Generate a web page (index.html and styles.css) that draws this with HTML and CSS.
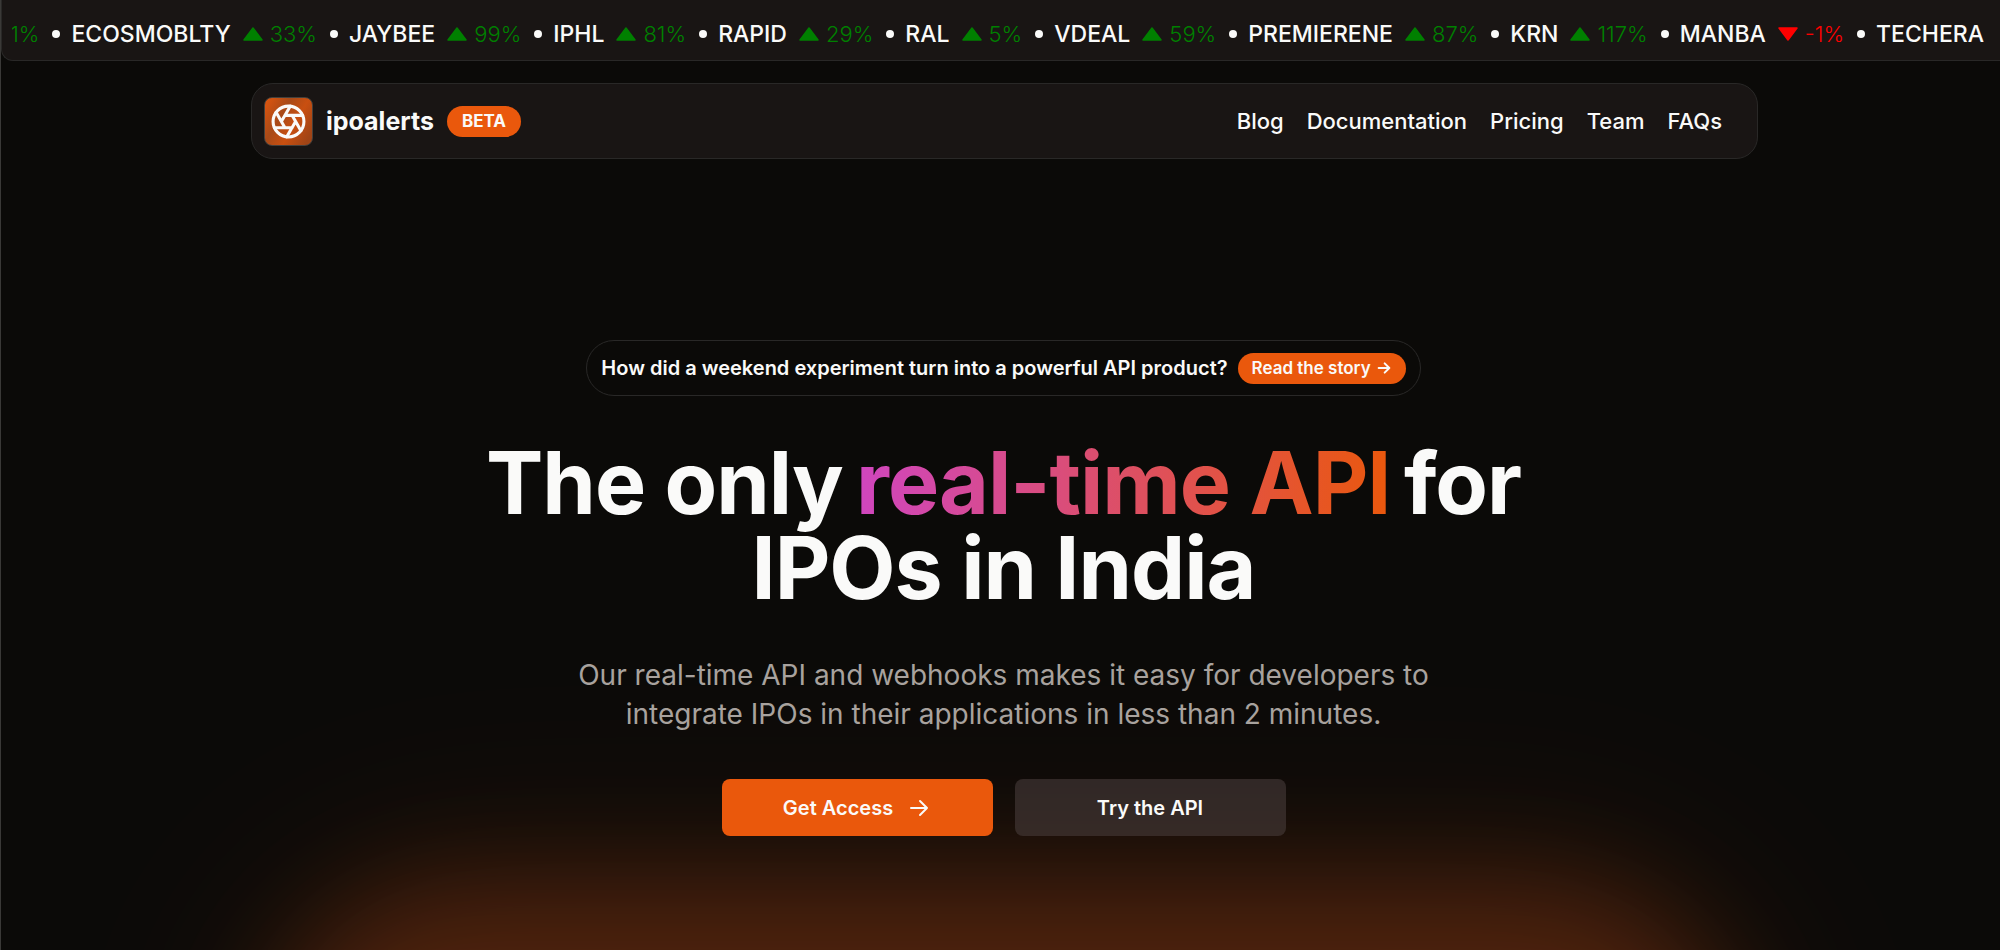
FILE: index.html
```html
<!DOCTYPE html>
<html lang="en">
<head>
    <meta charset="UTF-8">
    <meta name="viewport" content="width=device-width, initial-scale=1.0">
    <title>ipoalerts - Real-time API for IPOs in India</title>
    <link rel="stylesheet" href="styles.css">
</head>
<body>
    <svg class="sprite" aria-hidden="true">
        <symbol id="up" viewBox="0 0 20 14">
            <path d="M10 1 L19 13 H1 Z" fill="currentColor" stroke="currentColor" stroke-width="1.5" stroke-linejoin="round"/>
        </symbol>
        <symbol id="down" viewBox="0 0 20 14">
            <path d="M10 13 L19 1 H1 Z" fill="currentColor" stroke="currentColor" stroke-width="1.5" stroke-linejoin="round"/>
        </symbol>
    </svg>

    <div class="ticker">
        <ul class="ticker-track">
            <li><span class="up">11%</span></li>
            <li><b>ECOSMOBLTY</b><span class="up"><svg><use href="#up"/></svg>33%</span></li>
            <li><b>JAYBEE</b><span class="up"><svg><use href="#up"/></svg>99%</span></li>
            <li><b>IPHL</b><span class="up"><svg><use href="#up"/></svg>81%</span></li>
            <li><b>RAPID</b><span class="up"><svg><use href="#up"/></svg>29%</span></li>
            <li><b>RAL</b><span class="up"><svg><use href="#up"/></svg>5%</span></li>
            <li><b>VDEAL</b><span class="up"><svg><use href="#up"/></svg>59%</span></li>
            <li><b>PREMIERENE</b><span class="up"><svg><use href="#up"/></svg>87%</span></li>
            <li><b>KRN</b><span class="up"><svg><use href="#up"/></svg>117%</span></li>
            <li><b>MANBA</b><span class="down"><svg><use href="#down"/></svg>-1%</span></li>
            <li><b>TECHERA</b></li>
        </ul>
    </div>

    <header class="navbar">
        <a class="brand" href="#">
            <span class="logo">
                <svg viewBox="0 0 24 24" fill="none" stroke="currentColor" stroke-width="2" stroke-linecap="round" stroke-linejoin="round">
                    <circle cx="12" cy="12" r="10"/>
                    <path d="m14.31 8 5.74 9.94M9.69 8h11.48M7.38 12l5.74-9.94M9.69 16 3.95 6.06M14.31 16H2.83M16.62 12l-5.74 9.94"/>
                </svg>
            </span>
            ipoalerts
            <span class="badge">BETA</span>
        </a>
        <nav class="links">
            <a href="#blog">Blog</a>
            <a href="#docs">Documentation</a>
            <a href="#pricing">Pricing</a>
            <a href="#team">Team</a>
            <a href="#faqs">FAQs</a>
        </nav>
    </header>

    <main class="hero">
        <div class="story">
            How did a weekend experiment turn into a powerful API product?
            <a class="story-link" href="#story">Read the story
                <svg viewBox="0 0 24 24" fill="none" stroke="currentColor" stroke-width="3" stroke-linecap="round" stroke-linejoin="round"><path d="M4 12h16M13 5l7 7-7 7"/></svg>
            </a>
        </div>

        <h1>The only <span class="highlight">real-time API</span> for<br>IPOs in India</h1>

        <p>Our real-time API and webhooks makes it easy for developers to integrate IPOs in their applications in less than 2 minutes.</p>

        <div class="actions">
            <button type="button" class="primary">Get Access
                <svg viewBox="0 0 24 24" fill="none" stroke="currentColor" stroke-width="2" stroke-linecap="round" stroke-linejoin="round"><path d="M4 12h16M13 5l7 7-7 7"/></svg>
            </button>
            <button type="button" class="secondary">Try the API</button>
        </div>
    </main>

    <div class="glow"><span class="glow-wide"></span><span class="glow-core"></span></div>
</body>
</html>
```
FILE: styles.css
```css
* {
    box-sizing: border-box;
}

body {
    position: relative;
    min-height: 100vh;
    margin: 0;
    overflow: hidden;
    border-left: 1px solid #3a3937;
    background-color: #0b0a08;
    color: #fafaf9;
    font-family: Inter, sans-serif;
}

a {
    color: inherit;
    text-decoration: none;
}

.sprite {
    display: none;
}

/* ticker */
.ticker {
    height: 61px;
    padding: 0 16px 0 10px;
    border: 1px solid #292827;
    border-top: none;
    border-right: none;
    border-bottom-left-radius: 12px;
    background-color: #191514;
}

.ticker-track {
    display: flex;
    justify-content: flex-end;
    align-items: center;
    height: 100%;
    margin: 0;
    padding: 7px 0 0;
    overflow: hidden;
    list-style: none;
    white-space: nowrap;
}

.ticker-track li {
    display: flex;
    flex-shrink: 0;
    align-items: center;
}

.ticker-track li + li::before {
    content: "";
    width: 8px;
    height: 8px;
    margin: 0 11px 0 13px;
    border-radius: 50%;
    background-color: #fafaf9;
}

.ticker-track b {
    font-size: 23px;
    font-weight: 500;
}

.ticker-track span {
    display: flex;
    align-items: center;
    gap: 7px;
    margin-left: 12px;
    font-size: 22px;
    font-weight: 300;
}

.ticker-track svg {
    width: 20px;
    height: 14px;
}

.up {
    color: #008000;
}

.down {
    color: #ff0000;
}

/* navbar */
.navbar {
    display: flex;
    justify-content: space-between;
    align-items: center;
    width: calc(100% - 32px);
    max-width: 1507px;
    height: 76px;
    margin: 22px auto 0;
    padding: 0 35px 0 12px;
    border: 1px solid #292827;
    border-radius: 22px;
    background-color: #191514;
    position: relative;
    left: 4px;
}

.brand {
    display: flex;
    align-items: center;
    gap: 13px;
    font-size: 25px;
    font-weight: 700;
}

.logo {
    display: flex;
    justify-content: center;
    align-items: center;
    width: 49px;
    height: 49px;
    border: 1px solid #44403c;
    border-radius: 8px;
    background: linear-gradient(120deg, #e0560e, #a84a18 35%, #c94f10 60%, #a04416 90%);
}

.logo svg {
    width: 37px;
    height: 37px;
}

.badge {
    padding: 0 15px;
    border-radius: 16px;
    background-color: #ea580c;
    font-size: 17px;
    font-weight: 700;
    line-height: 31px;
}

.links {
    display: flex;
    gap: 23px;
    font-size: 22px;
    font-weight: 500;
}

/* hero */
.hero {
    position: relative;
    z-index: 1;
    display: flex;
    flex-direction: column;
    align-items: center;
    padding: 181px 24px 0 30px;
    text-align: center;
}

.story {
    display: flex;
    align-items: center;
    gap: 10px;
    height: 56px;
    padding: 0 14px;
    border: 1px solid #292827;
    border-radius: 28px;
    font-size: 20px;
    font-weight: 600;
}

.story-link {
    display: flex;
    align-items: center;
    gap: 5px;
    padding: 0 14px;
    border-radius: 16px;
    background-color: #ea580c;
    font-size: 17px;
    line-height: 31px;
}

.story-link svg {
    width: 16px;
    height: 16px;
}

h1 {
    margin: 45px 0 0;
    font-size: 86px;
    font-weight: 700;
    line-height: 85px;
    letter-spacing: -1px;
}

.highlight {
    margin: 0 -6px;
    background: linear-gradient(90deg, #d046bf, #ea580c);
    -webkit-background-clip: text;
    background-clip: text;
    color: transparent;
}

.hero p {
    max-width: 880px;
    margin: 45px 0 0;
    color: #a8a29e;
    font-size: 28px;
    line-height: 39px;
}

.actions {
    display: flex;
    gap: 22px;
    margin-top: 45px;
}

.actions button {
    display: flex;
    justify-content: center;
    align-items: center;
    gap: 14px;
    width: 271px;
    height: 57px;
    border: none;
    border-radius: 8px;
    color: #fafaf9;
    font-family: inherit;
    font-size: 20px;
    font-weight: 600;
    cursor: pointer;
}

.actions svg {
    width: 24px;
    height: 24px;
}

.actions .primary {
    background-color: #ea580c;
}

.actions .secondary {
    background-color: rgba(72, 60, 58, 0.6);
}

/* orange light coming up from the bottom edge */
.glow {
    position: absolute;
    inset: 0;
    overflow: hidden;
}

.glow-wide,
.glow-core {
    position: absolute;
    background-color: #ee5d1c;
}

.glow-wide {
    right: 11%;
    bottom: -200px;
    left: 11%;
    height: 310px;
    border-radius: 240px 240px 0 0;
    opacity: 0.08;
    filter: blur(100px);
}

.glow-core {
    right: 13%;
    bottom: -200px;
    left: 13%;
    height: 270px;
    border-radius: 200px 200px 0 0;
    opacity: 0.24;
    filter: blur(54px);
}
```
